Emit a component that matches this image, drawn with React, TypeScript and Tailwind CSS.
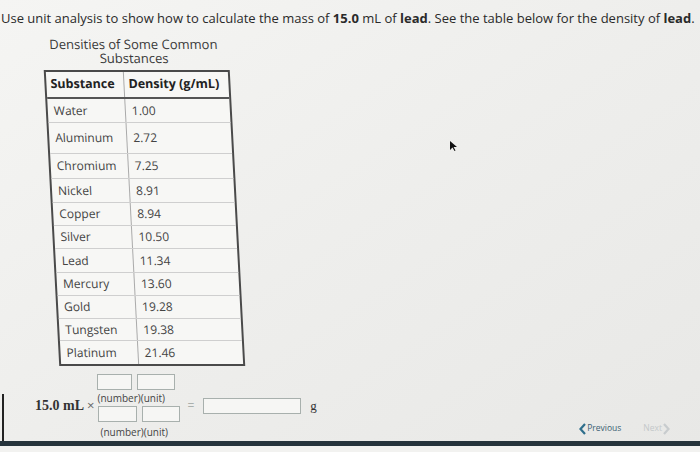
import React from 'react';

type Row = { name: string; density: string; h: string };

const rows: Row[] = [
    { name: 'Water', density: '1.00', h: 'h-[24px]' },
    { name: 'Aluminum', density: '2.72', h: 'h-[31px]' },
    { name: 'Chromium', density: '7.25', h: 'h-[25px]' },
    { name: 'Nickel', density: '8.91', h: 'h-[24px]' },
    { name: 'Copper', density: '8.94', h: 'h-[23px]' },
    { name: 'Silver', density: '10.50', h: 'h-[23px]' },
    { name: 'Lead', density: '11.34', h: 'h-[24px]' },
    { name: 'Mercury', density: '13.60', h: 'h-[23px]' },
    { name: 'Gold', density: '19.28', h: 'h-[23px]' },
    { name: 'Tungsten', density: '19.38', h: 'h-[22px]' },
    { name: 'Platinum', density: '21.46', h: 'h-[23px]' },
];

function Box({ className }: { className: string }) {
    return <div className={`border border-[#a8b0ad] bg-[#f6f6f4] ${className}`} />;
}

function Label() {
    return (
        <div className="text-[10px] leading-none text-[#444] font-['Open_Sans',sans-serif]">
            (number)(unit)
        </div>
    );
}

export default function App() {
    return (
        <div className="relative w-[700px] h-[452px] overflow-hidden flex flex-col bg-gradient-to-br from-[#f5f5f3] via-[#eeeeec] to-[#e8e8e6] font-['Open_Sans',sans-serif] text-[#333]">
            <p className="pt-[9px] pl-[1px] text-[13px] leading-[18px] text-[#2a2a2a] whitespace-nowrap">
                Use unit analysis to show how to calculate the mass of <b>15.0</b> mL of <b>lead</b>. See the table below for the density of <b>lead</b>.
            </p>

            {/* density table */}
            <div className="ml-[42px] mt-[10px] w-[186px] flex flex-col skew-x-[3deg] origin-top">
                <div className="text-center text-[13px] leading-[14px] text-[#3a3a3a] mb-[5px] pr-[4px]">
                    Densities of Some Common
                    <br />
                    Substances
                </div>
                <div className="border-2 border-[#4a4a4a] bg-[#f7f7f5]">
                    <div className="flex h-[27px] items-center border-b-2 border-[#555] font-bold text-[12.5px] text-[#222]">
                        <div className="w-[78px] pl-[4px] h-full flex items-center border-r border-[#aaa]">Substance</div>
                        <div className="flex-1 pl-[4px]">Density (g/mL)</div>
                    </div>
                    {rows.map((r, i) => (
                        <div
                            key={r.name}
                            className={`flex items-center text-[12px] text-[#444] ${r.h} ${i < rows.length - 1 ? 'border-b border-[#cfcfcf]' : ''}`}
                        >
                            <div className="w-[78px] pl-[6px] h-full flex items-center border-r border-[#aaa]">{r.name}</div>
                            <div className="flex-1 pl-[6px]">{r.density}</div>
                        </div>
                    ))}
                </div>
            </div>

            {/* unit analysis expression */}
            <div className="relative flex-1 flex items-start">
                <div className="absolute left-[2px] top-[28px] bottom-0 w-[2px] bg-[#222]" />
                <div className="ml-[35px] mt-[8px] flex items-center">
                    <span className="font-['Liberation_Serif',serif] text-[14px] font-semibold text-[#333] mr-[3px]">15.0 mL</span>
                    <span className="text-[13px] text-[#666] mr-[3px]">×</span>
                    <div className="flex flex-col items-start gap-[3px]">
                        <div className="flex gap-[5px]">
                            <Box className="w-[35px] h-[16px]" />
                            <Box className="w-[38px] h-[16px]" />
                        </div>
                        <Label />
                        <div className="flex gap-[5px] ml-[1px]">
                            <Box className="w-[39px] h-[16px]" />
                            <Box className="w-[38px] h-[16px]" />
                        </div>
                        <div className="ml-[3px] mt-[2px]">
                            <Label />
                        </div>
                    </div>
                    <span className="ml-[7px] text-[12px] text-[#aab0ad]">=</span>
                    <Box className="ml-[9px] w-[98px] h-[16px]" />
                    <span className="ml-[9px] font-['Liberation_Serif',serif] text-[13px] text-[#333]">g</span>
                </div>
                <div className="absolute right-[30px] bottom-[6px] flex items-center gap-[22px] text-[8.5px]">
                    <div className="flex items-center gap-[1px] text-[#3b5f73]">
                        <svg width="7" height="12" viewBox="0 0 7 12"><path d="M6 1 L1.5 6 L6 11" fill="none" stroke="#2f6f8c" strokeWidth="2.2" /></svg>
                        <span>Previous</span>
                    </div>
                    <div className="flex items-center gap-[1px] text-[#c4c8ca]">
                        <span>Next</span>
                        <svg width="7" height="12" viewBox="0 0 7 12"><path d="M1 1 L5.5 6 L1 11" fill="none" stroke="#c8ccce" strokeWidth="2.2" /></svg>
                    </div>
                </div>
            </div>

            <div className="h-[5px] bg-[#26343c]" />
            <div className="h-[6px] bg-[#f2f2f0]" />

            <svg className="absolute left-[449px] top-[140px]" width="9" height="12" viewBox="0 0 9 12">
                <path d="M1 1 L1 10 L3.5 7.5 L5.5 11 L6.5 10.5 L4.6 7 L8 7 Z" fill="#111" />
            </svg>
        </div>
    );
}
